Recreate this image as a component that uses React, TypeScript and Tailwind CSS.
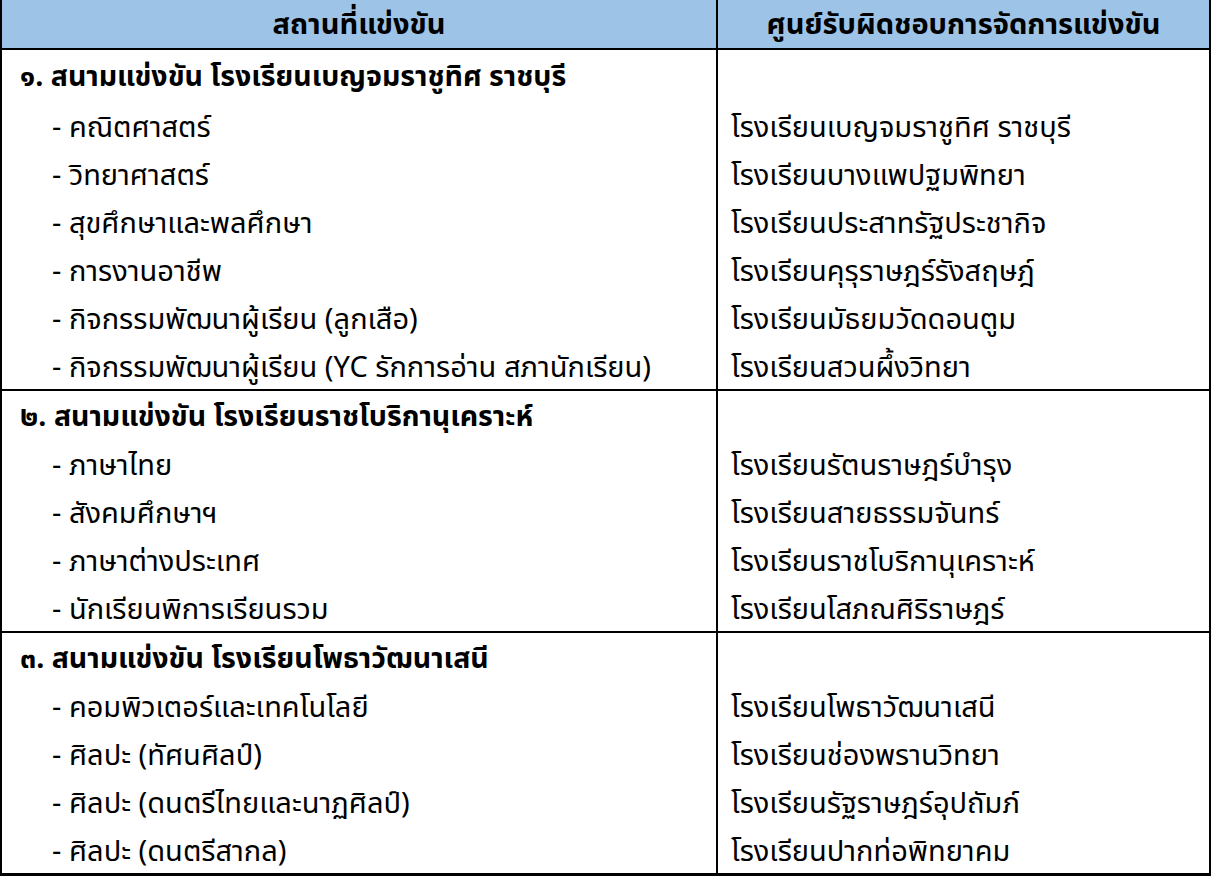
const sections = [
  {
    title: "๑. สนามแข่งขัน โรงเรียนเบญจมราชูทิศ ราชบุรี",
    rows: [
      ["คณิตศาสตร์", "โรงเรียนเบญจมราชูทิศ ราชบุรี"],
      ["วิทยาศาสตร์", "โรงเรียนบางแพปฐมพิทยา"],
      ["สุขศึกษาและพลศึกษา", "โรงเรียนประสาทรัฐประชากิจ"],
      ["การงานอาชีพ", "โรงเรียนคุรุราษฎร์รังสฤษฎ์"],
      ["กิจกรรมพัฒนาผู้เรียน (ลูกเสือ)", "โรงเรียนมัธยมวัดดอนตูม"],
      ["กิจกรรมพัฒนาผู้เรียน (YC รักการอ่าน สภานักเรียน)", "โรงเรียนสวนผึ้งวิทยา"],
    ],
  },
  {
    title: "๒. สนามแข่งขัน โรงเรียนราชโบริกานุเคราะห์",
    rows: [
      ["ภาษาไทย", "โรงเรียนรัตนราษฎร์บำรุง"],
      ["สังคมศึกษาฯ", "โรงเรียนสายธรรมจันทร์"],
      ["ภาษาต่างประเทศ", "โรงเรียนราชโบริกานุเคราะห์"],
      ["นักเรียนพิการเรียนรวม", "โรงเรียนโสภณศิริราษฎร์"],
    ],
  },
  {
    title: "๓. สนามแข่งขัน โรงเรียนโพธาวัฒนาเสนี",
    rows: [
      ["คอมพิวเตอร์และเทคโนโลยี", "โรงเรียนโพธาวัฒนาเสนี"],
      ["ศิลปะ (ทัศนศิลป์)", "โรงเรียนช่องพรานวิทยา"],
      ["ศิลปะ (ดนตรีไทยและนาฏศิลป์)", "โรงเรียนรัฐราษฎร์อุปถัมภ์"],
      ["ศิลปะ (ดนตรีสากล)", "โรงเรียนปากท่อพิทยาคม"],
    ],
  },
];

export default function App() {
  return (
    <div className="w-[1211px] h-[876px] bg-white text-black font-['Tahoma','Noto_Sans_Thai','Noto_Sans',sans-serif] text-[29px] leading-none">
      <div className="border-x-2 border-b-[3px] border-black">
        <div className="grid grid-cols-[716px_1fr] h-[50px] bg-[#9dc3e6] font-bold border-b-2 border-black">
          <div className="flex items-center justify-center border-r-2 border-black pt-[2px]">สถานที่แข่งขัน</div>
          <div className="flex items-center justify-center pt-[2px]">ศูนย์รับผิดชอบการจัดการแข่งขัน</div>
        </div>
        {sections.map((s, i) => (
          <div
            key={s.title}
            className={`grid grid-cols-[716px_1fr] ${i === 0 ? "h-[341px] pt-[3px]" : i === 1 ? "h-[242px]" : "h-[240px]"} ${i < sections.length - 1 ? "border-b-2 border-black" : ""}`}
          >
            <div className={`border-r-2 border-black ${i === 0 ? "-mt-[3px] pt-[3px]" : ""}`}>
              <div className={`h-[48px] flex items-center pl-[18px] text-[28.5px] font-bold ${i === 0 ? "pt-[3px]" : "pt-[6px]"}`}>
                {s.title}
              </div>
              {s.rows.map((r) => (
                <div key={r[0]} className="h-[48px] flex items-center pl-[50px] pt-[6px]">
                  - {r[0]}
                </div>
              ))}
            </div>
            <div>
              <div className="h-[48px]" />
              {s.rows.map((r) => (
                <div key={r[1]} className="h-[48px] flex items-center pl-[13px] pt-[6px]">
                  {r[1]}
                </div>
              ))}
            </div>
          </div>
        ))}
      </div>
    </div>
  );
}
